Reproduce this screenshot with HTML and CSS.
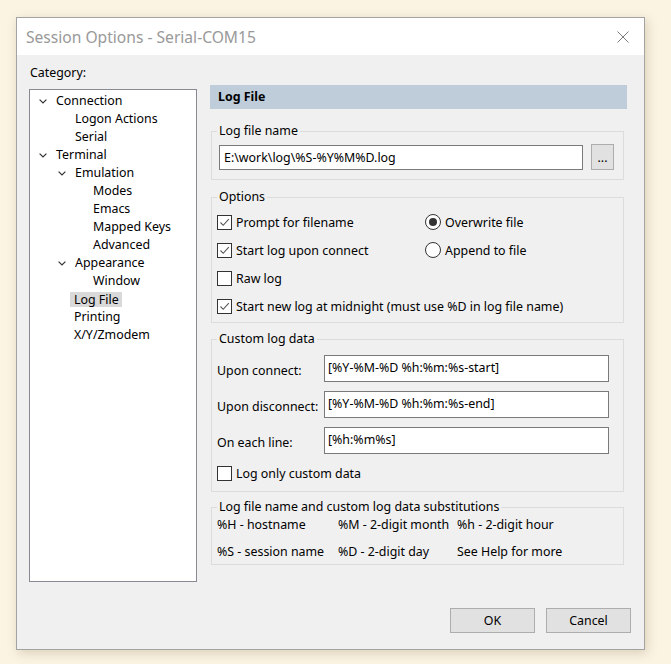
FILE: index.html
```html
<!DOCTYPE html>
<html>
<head>
<meta charset="utf-8">
<link rel="stylesheet" href="styles.css">
</head>
<body>
<div class="window">
  <div class="titlebar">
    <span class="title">Session Options - Serial-COM15</span>
    <svg class="close" width="12" height="12" viewBox="0 0 12 12"><path d="M0.5 0.5 L11.5 11.5 M11.5 0.5 L0.5 11.5" stroke="#7a7a7a" stroke-width="1" fill="none"/></svg>
  </div>
  <div class="body">
    <div class="leftcol">
      <div class="cat-label">Category:</div>
      <div class="tree">
        <div class="row l0"><span class="chev"><svg width="8" height="5" viewBox="0 0 8 5"><path d="M0.6 0.6 L4 4 L7.4 0.6" stroke="#333" stroke-width="1.2" fill="none"/></svg></span><span class="txt">Connection</span></div>
        <div class="row l1"><span class="chev"></span><span class="txt">Logon Actions</span></div>
        <div class="row l1"><span class="chev"></span><span class="txt">Serial</span></div>
        <div class="row l0"><span class="chev"><svg width="8" height="5" viewBox="0 0 8 5"><path d="M0.6 0.6 L4 4 L7.4 0.6" stroke="#333" stroke-width="1.2" fill="none"/></svg></span><span class="txt">Terminal</span></div>
        <div class="row l1"><span class="chev"><svg width="8" height="5" viewBox="0 0 8 5"><path d="M0.6 0.6 L4 4 L7.4 0.6" stroke="#333" stroke-width="1.2" fill="none"/></svg></span><span class="txt">Emulation</span></div>
        <div class="row l2"><span class="chev"></span><span class="txt">Modes</span></div>
        <div class="row l2"><span class="chev"></span><span class="txt">Emacs</span></div>
        <div class="row l2"><span class="chev"></span><span class="txt">Mapped Keys</span></div>
        <div class="row l2"><span class="chev"></span><span class="txt">Advanced</span></div>
        <div class="row l1"><span class="chev"><svg width="8" height="5" viewBox="0 0 8 5"><path d="M0.6 0.6 L4 4 L7.4 0.6" stroke="#333" stroke-width="1.2" fill="none"/></svg></span><span class="txt">Appearance</span></div>
        <div class="row l2"><span class="chev"></span><span class="txt">Window</span></div>
        <div class="row l0b"><span class="txt sel">Log File</span></div>
        <div class="row l0b"><span class="txt">Printing</span></div>
        <div class="row l0b"><span class="txt">X/Y/Zmodem</span></div>
      </div>
    </div>
    <div class="rightcol">
      <div class="header">Log File</div>

      <fieldset class="group g1">
        <legend>Log file name</legend>
        <div class="filerow">
          <div class="input wide">E:\work\log\%S-%Y%M%D.log</div>
          <div class="btn small">...</div>
        </div>
      </fieldset>

      <fieldset class="group g2">
        <legend>Options</legend>
        <div class="optgrid">
          <div class="opt"><span class="cb"><svg width="13" height="13" viewBox="0 0 13 13"><path d="M2.5 6.5 L5.2 9.3 L10.8 3.2" stroke="#555" stroke-width="1.1" fill="none"/></svg></span>Prompt for filename</div>
          <div class="opt"><span class="rb on"><span class="dot"></span></span>Overwrite file</div>
          <div class="opt"><span class="cb"><svg width="13" height="13" viewBox="0 0 13 13"><path d="M2.5 6.5 L5.2 9.3 L10.8 3.2" stroke="#555" stroke-width="1.1" fill="none"/></svg></span>Start log upon connect</div>
          <div class="opt"><span class="rb"></span>Append to file</div>
          <div class="opt span2"><span class="cb"></span>Raw log</div>
          <div class="opt span2"><span class="cb"><svg width="13" height="13" viewBox="0 0 13 13"><path d="M2.5 6.5 L5.2 9.3 L10.8 3.2" stroke="#555" stroke-width="1.1" fill="none"/></svg></span>Start new log at midnight (must use %D in log file name)</div>
        </div>
      </fieldset>

      <fieldset class="group g3">
        <legend>Custom log data</legend>
        <div class="crow"><span class="clabel">Upon connect:</span><div class="input cin">[%Y-%M-%D %h:%m:%s-start]</div></div>
        <div class="crow"><span class="clabel">Upon disconnect:</span><div class="input cin">[%Y-%M-%D %h:%m:%s-end]</div></div>
        <div class="crow"><span class="clabel">On each line:</span><div class="input cin">[%h:%m%s]</div></div>
        <div class="opt last"><span class="cb"></span>Log only custom data</div>
      </fieldset>

      <fieldset class="group g4">
        <legend>Log file name and custom log data substitutions</legend>
        <div class="subgrid">
          <span>%H - hostname</span><span>%M - 2-digit month</span><span>%h - 2-digit hour</span>
          <span>%S - session name</span><span>%D - 2-digit day</span><span>See Help for more</span>
        </div>
      </fieldset>
    </div>
  </div>
  <div class="footer">
    <div class="btn big">OK</div>
    <div class="btn big">Cancel</div>
  </div>
</div>
</body>
</html>
```
FILE: styles.css
```css
html, body {
  margin: 0;
  padding: 0;
}
body {
  background: #fbf4e3;
  font-family: "Noto Sans", "Open Sans", sans-serif;
  font-size: 12.4px;
  color: #000;
  width: 671px;
  height: 664px;
  overflow: hidden;
}
.window {
  margin: 17px 0 0 16px;
  width: 627px;
  height: 631px;
  border: 1px solid #a3a3a3;
  background: #f0f0f0;
  box-shadow: 2px 3px 10px rgba(120, 100, 60, 0.25);
  display: flex;
  flex-direction: column;
}
.titlebar {
  height: 37px;
  background: #fff;
  display: flex;
  align-items: center;
  justify-content: space-between;
  padding: 0 15px 0 9px;
}
.title {
  font-size: 15.6px;
  color: #999;
  line-height: 20px;
}
.close {
  display: block;
}
.body {
  display: flex;
  padding-left: 12px;
}
.leftcol {
  width: 168px;
}
.cat-label {
  margin-top: 10px;
  line-height: 16px;
  padding-left: 1px;
}
.tree {
  margin-top: 8px;
  border: 1px solid #878a93;
  background: #fff;
  padding-top: 2px;
  box-sizing: border-box;
  height: 493px;
}
.row {
  height: 18px;
  display: flex;
  align-items: center;
  line-height: 18px;
  white-space: nowrap;
}
.row.l0 { padding-left: 9px; }
.row.l1 { padding-left: 28px; }
.row.l2 { padding-left: 46px; }
.row.l0b { padding-left: 44px; }
.chev {
  width: 17px;
  flex: none;
  display: flex;
  align-items: center;
}
.chev svg { display: block; }
.txt.sel {
  background: #d9d9d9;
  line-height: 15px;
  padding: 0 3px 0 4px;
  margin-left: -4px;
}
.rightcol {
  margin-left: 13px;
  margin-top: 30px;
  width: 417px;
}
.header {
  height: 24px;
  line-height: 24px;
  background: #bfcddb;
  font-weight: bold;
  padding-left: 8px;
}
.group {
  margin: 0 3px 0 1px;
  border: 1px solid #dcdcdc;
  padding: 0 0 0 5px;
  min-width: 0;
}
.group legend {
  padding: 0 2px;
  margin-left: 0;
  line-height: 16px;
}
.g1 {
  margin-top: 14px;
  padding: 5px 9px 9px 7px;
}
.g1 legend { margin-left: -2px; }
.filerow {
  display: flex;
  align-items: center;
  gap: 8px;
  height: 26px;
}
.input {
  background: #fff;
  border: 1px solid #7a7a7a;
  box-sizing: border-box;
  white-space: nowrap;
  overflow: hidden;
}
.input.wide {
  width: 364px;
  height: 25px;
  line-height: 23px;
  padding: 0 4px;
}
.btn {
  background: #e1e1e1;
  border: 1px solid #adadad;
  box-sizing: border-box;
  text-align: center;
}
.btn.small {
  width: 23px;
  height: 26px;
  line-height: 26px;
}
.g2 {
  margin-top: 9px;
  padding: 3px 0 2px 5px;
}
.optgrid {
  display: grid;
  grid-template-columns: 208px auto;
  grid-auto-rows: 28px;
}
.opt {
  display: flex;
  align-items: center;
  white-space: nowrap;
}
.span2 { grid-column: 1 / 3; }
.cb {
  width: 15px;
  height: 15px;
  border: 1px solid #333;
  box-sizing: border-box;
  background: #fff;
  margin-right: 4px;
  flex: none;
  display: flex;
  align-items: center;
  justify-content: center;
}
.cb svg { display: block; }
.rb {
  width: 16px;
  height: 16px;
  border: 1px solid #333;
  border-radius: 50%;
  box-sizing: border-box;
  background: #fff;
  margin-right: 4px;
  flex: none;
  display: flex;
  align-items: center;
  justify-content: center;
}
.rb .dot {
  width: 8px;
  height: 8px;
  border-radius: 50%;
  background: #333;
}
.g3 {
  margin-top: 8px;
  padding: 8px 14px 4px 5px;
}
.crow {
  display: flex;
  align-items: center;
  height: 27px;
  margin-bottom: 9px;
}
.crow:nth-of-type(3) { margin-bottom: 5px; }
.clabel {
  width: 107px;
  flex: none;
  padding-top: 3px;
  white-space: nowrap;
}
.input.cin {
  width: 286px;
  height: 27px;
  line-height: 23px;
  padding: 0 3px;
}
.opt.last {
  height: 28px;
}
.g4 {
  margin-top: 7px;
  padding: 0 0 2px 5px;
}
.subgrid {
  display: grid;
  grid-template-columns: 121px 119px auto;
  grid-auto-rows: 20px;
  row-gap: 7px;
  line-height: 20px;
  white-space: nowrap;
}
.footer {
  margin-top: 26px;
  display: flex;
  justify-content: flex-end;
  gap: 11px;
  padding-right: 13px;
}
.btn.big {
  width: 85px;
  height: 25px;
  line-height: 23px;
}
```
